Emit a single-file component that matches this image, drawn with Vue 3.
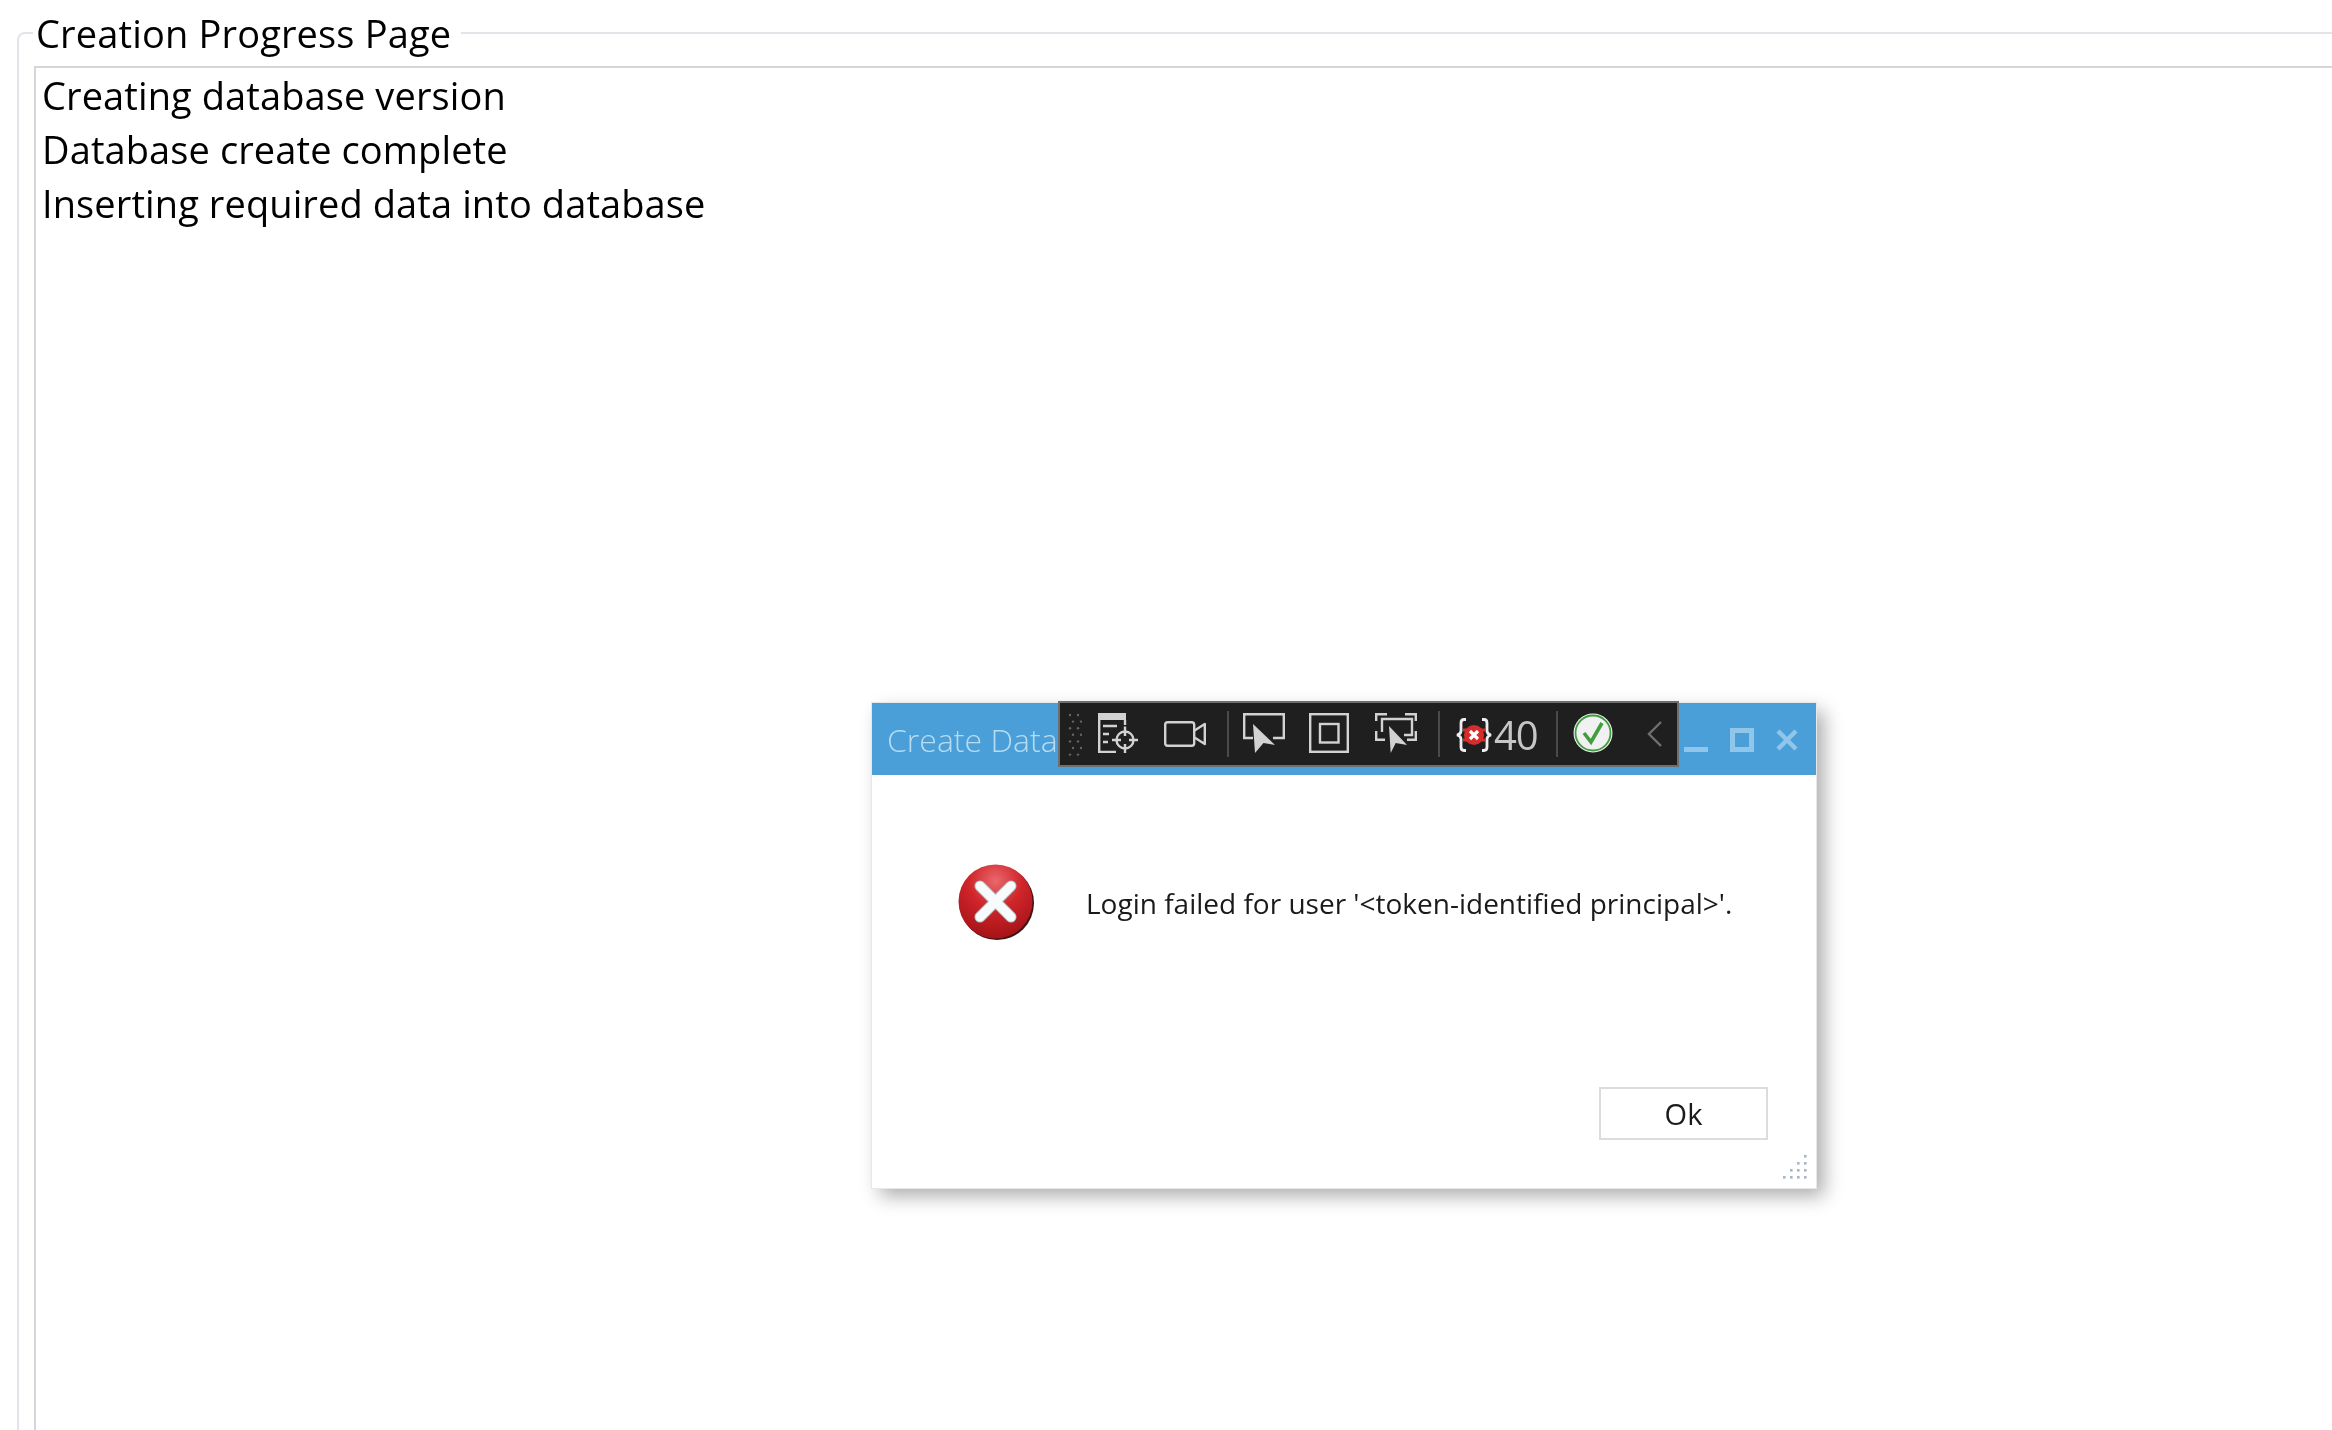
<script setup>
const lines = ['Creating database version', 'Database create complete', 'Inserting required data into database']
const dots = []
for (let r = 0; r < 4; r++) for (let c = 3 - r; c < 4; c++) dots.push({ x: 3 + c * 7, y: 3 + r * 7 })
const gripDots = []
for (let r = 0; r < 7; r++) for (let c = 0; c < 2; c++) gripDots.push({ x: 2 + c * 8 + (r % 2) * 3, y: 2 + r * 6.6 })
</script>

<template>
  <div class="page">
    <fieldset class="group">
      <legend class="legend">Creation Progress Page</legend>
      <div class="log">
        <div v-for="l in lines" :key="l" class="line">{{ l }}</div>
      </div>
    </fieldset>

    <section class="dialog">
      <header class="titlebar">
        <span class="title">Create Database</span>
        <div class="winbtns">
          <svg width="24" height="24" viewBox="0 0 24 24"><rect x="0" y="19" width="24" height="5" fill="#8fc6ea"/></svg>
          <svg width="24" height="24" viewBox="0 0 24 24"><rect x="2.5" y="2.5" width="19" height="19" fill="none" stroke="#8fc6ea" stroke-width="5"/></svg>
          <svg width="22" height="22" viewBox="0 0 22 22"><path d="M2 2 20 20M20 2 2 20" stroke="#8fc6ea" stroke-width="4.5" fill="none"/></svg>
        </div>
      </header>

      <div class="toolbar">
        <svg class="grip" width="14" height="46" viewBox="0 0 14 46">
          <circle v-for="(d, i) in gripDots" :key="i" :cx="d.x" :cy="d.y" r="1.2" fill="#666"/>
        </svg>
        <svg class="ic ic1" width="40" height="40" viewBox="0 0 40 40" fill="none" stroke="#d2d2d2" stroke-width="2.4">
          <rect x="0" y="0" width="28" height="7" fill="#d2d2d2" stroke="none"/>
          <path d="M1.2 7V39H18M27 7V12M5 13H19M5 21H11M5 29H10"/>
          <circle cx="27" cy="27" r="8.5"/>
          <path d="M27 13.5V23M27 31V40.5M14 27H23M31 27H40"/>
        </svg>
        <svg class="ic ic2" width="42" height="26" viewBox="0 0 42 26" fill="none" stroke="#d2d2d2" stroke-width="2.4" stroke-linejoin="round">
          <rect x="1.2" y="1.2" width="29" height="23.6" rx="2.5"/>
          <path d="M30.5 9.5 40.8 3V23L30.5 16.5"/>
        </svg>
        <i class="sep sep1"></i>
        <svg class="ic ic3" width="42" height="40" viewBox="0 0 42 40" fill="none" stroke="#d2d2d2" stroke-width="2.4">
          <path d="M10 25H1.2V1.2H40.8V25H30"/>
          <path d="M10 11 12 40 20.5 30 32 32Z" fill="#d2d2d2" stroke="none"/>
        </svg>
        <svg class="ic ic4" width="40" height="40" viewBox="0 0 40 40" fill="none" stroke="#d2d2d2" stroke-width="2.4">
          <rect x="1.2" y="1.2" width="37.6" height="37.6"/>
          <rect x="11" y="11" width="18.5" height="18.5"/>
        </svg>
        <svg class="ic ic5" width="42" height="40" viewBox="0 0 42 40" fill="none" stroke="#d2d2d2" stroke-width="2.4">
          <path d="M1.2 8V1.2H12M30 1.2H40.8V8M1.2 18V26.8H10M40.8 18V26.8H32"/>
          <path d="M7 19V6H37V22H29"/>
          <path d="M14 13 15.7 40 20.7 30 32 32Z" fill="#d2d2d2" stroke="none"/>
        </svg>
        <i class="sep sep2"></i>
        <svg class="ic ic6" width="38" height="34" viewBox="0 0 38 34">
          <path d="M11 1.5H9Q6 1.5 6 5V13Q6 16 2 17 6 18 6 21V29Q6 32.5 9 32.5H11M27 1.5H29Q32 1.5 32 5V13Q32 16 36 17 32 18 32 21V29Q32 32.5 29 32.5H27" fill="none" stroke="#eeeeee" stroke-width="2.8"/>
          <path d="M8 12H12M8 22H12M26 12H30M26 22H30" stroke="#d62c2c" stroke-width="3"/>
          <circle cx="19" cy="17" r="10" fill="#d62c2c"/>
          <path d="M15 13 23 21M23 13 15 21" stroke="#fff" stroke-width="3.2"/>
        </svg>
        <span class="count">40</span>
        <i class="sep sep3"></i>
        <svg class="ic ic7" width="40" height="40" viewBox="0 0 40 40">
          <circle cx="20" cy="20" r="19.5" fill="#f1f1f1"/>
          <circle cx="20" cy="20" r="17.5" fill="none" stroke="#3f9e3f" stroke-width="1.8"/>
          <path d="M11 20 18 29 29 10" fill="none" stroke="#3f9e3f" stroke-width="3.6"/>
        </svg>
        <svg class="ic ic8" width="16" height="26" viewBox="0 0 16 26"><path d="M14 1 2 13 14 25" fill="none" stroke="#6f6f6f" stroke-width="2.4"/></svg>
      </div>

      <div class="body">
        <svg class="erricon" width="78" height="78" viewBox="0 0 78 78">
          <defs>
            <radialGradient id="redball" cx="50%" cy="22%" r="80%">
              <stop offset="0" stop-color="#e9686c"/>
              <stop offset="0.45" stop-color="#d0252b"/>
              <stop offset="1" stop-color="#a31216"/>
            </radialGradient>
          </defs>
          <circle cx="40" cy="40" r="37" fill="#3f1414"/>
          <circle cx="38.5" cy="38.5" r="37" fill="url(#redball)"/>
          <path d="M23 23 54 54M54 23 23 54" stroke="#9fd0d4" stroke-width="11" stroke-linecap="round" fill="none"/>
          <path d="M23 23 54 54M54 23 23 54" stroke="#f8fbfb" stroke-width="9" stroke-linecap="round" fill="none"/>
        </svg>
        <p class="msg">Login failed for user '&lt;token-identified principal&gt;'.</p>
      </div>

      <footer class="foot">
        <button class="ok">Ok</button>
      </footer>
      <svg class="resize" width="28" height="28" viewBox="0 0 28 28">
        <rect v-for="(d, i) in dots" :key="i" :x="d.x" :y="d.y" width="2.6" height="2.6" fill="#a9b3cc"/>
      </svg>
    </section>
  </div>
</template>

<style>
html, body { margin: 0; background: #fff; }
</style>

<style scoped>
.page {
  position: relative;
  width: 2332px;
  height: 1430px;
  overflow: hidden;
  background: #fff;
  font-family: "Open Sans", "Noto Sans", sans-serif;
  color: #000;
  filter: blur(0.5px);
}
.group {
  box-sizing: border-box;
  margin: 8px -40px 0 17px;
  padding: 0 0 0 15px;
  height: 1500px;
  border: 2px solid #e1e5ea;
  border-right: none;
  border-radius: 8px 0 0 0;
}
.legend {
  padding: 0 10px 0 3px;
  margin-left: -1px;
  font-size: 38px;
  line-height: 50px;
  letter-spacing: 0.15px;
}
.log {
  height: 100%;
  border: 2px solid #d4d6da;
  border-right: none;
  margin-top: 8px;
  padding: 0 0 0 6px;
  box-sizing: border-box;
}
.line {
  font-size: 38px;
  line-height: 54px;
  letter-spacing: 0.1px;
}
.dialog {
  position: absolute;
  left: 872px;
  top: 703px;
  width: 944px;
  height: 485px;
  background: #fff;
  box-shadow: 0 0 0 1px #e8e8e8, 8px 8px 18px rgba(0, 0, 0, 0.33);
  display: flex;
  flex-direction: column;
}
.titlebar {
  flex: none;
  height: 72px;
  background: #4b9fd8;
  display: flex;
  align-items: center;
  justify-content: space-between;
  padding: 0 18px 0 15px;
}
.title {
  font-weight: 300;
  font-size: 32px;
  color: #b5dcf3;
  white-space: nowrap;
}
.winbtns {
  display: flex;
  align-items: center;
  gap: 22px;
  margin-top: 1px;
}
.toolbar {
  position: absolute;
  left: 186px;
  top: -2px;
  box-sizing: border-box;
  width: 621px;
  height: 66px;
  background: #1f1f1f;
  border: 2px solid #6e6e6e;
}
.toolbar > * { position: absolute; }
.grip { left: 8px; top: 10px; }
.ic { display: block; }
.ic1 { left: 38px; top: 10px; }
.ic2 { left: 104px; top: 18px; }
.ic3 { left: 183px; top: 10px; }
.ic4 { left: 249px; top: 10px; }
.ic5 { left: 315px; top: 10px; }
.ic6 { left: 395px; top: 15px; }
.ic7 { left: 513px; top: 10px; }
.ic8 { left: 587px; top: 18px; }
.sep {
  width: 2px;
  top: 8px;
  height: 46px;
  background: #4a4a4a;
}
.sep1 { left: 167px; }
.sep2 { left: 378px; }
.sep3 { left: 496px; }
.count {
  left: 434px;
  top: 8px;
  font-size: 40px;
  line-height: 48px;
  letter-spacing: -1px;
  font-weight: 400;
  color: #c6c6c6;
}
.body {
  flex: 1;
  display: flex;
  align-items: flex-start;
  padding: 88px 0 0 85px;
}
.erricon { flex: none; display: block; }
.msg {
  margin: 20px 0 0 51px;
  font-size: 28px;
  line-height: 40px;
  white-space: nowrap;
  color: #1a1a1a;
}
.foot {
  flex: none;
  display: flex;
  justify-content: flex-end;
  padding: 0 48px 48px 0;
}
.ok {
  box-sizing: border-box;
  width: 169px;
  height: 53px;
  background: #fff;
  border: 2px solid #dcdcdc;
  font: inherit;
  font-size: 29px;
  color: #1a1a1a;
  padding: 0;
}
.resize {
  position: absolute;
  right: 8px;
  bottom: 8px;
}
</style>
